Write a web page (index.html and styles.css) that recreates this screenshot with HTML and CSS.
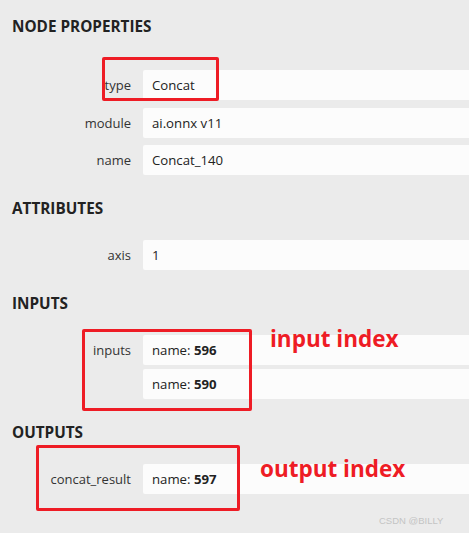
FILE: index.html
```html
<!DOCTYPE html>
<html>
<head>
<meta charset="utf-8">
<link rel="stylesheet" href="styles.css">
</head>
<body>
<div class="panel">
  <section class="section first">
    <h2 class="heading">NODE PROPERTIES</h2>
    <div class="rows">
      <div class="row"><div class="label">type</div><div class="values"><div class="value">Concat</div></div></div>
      <div class="row"><div class="label">module</div><div class="values"><div class="value">ai.onnx v11</div></div></div>
      <div class="row"><div class="label">name</div><div class="values"><div class="value">Concat_140</div></div></div>
    </div>
  </section>
  <section class="section">
    <h2 class="heading">ATTRIBUTES</h2>
    <div class="rows">
      <div class="row"><div class="label">axis</div><div class="values"><div class="value">1</div></div></div>
    </div>
  </section>
  <section class="section">
    <h2 class="heading">INPUTS</h2>
    <div class="rows">
      <div class="row"><div class="label">inputs</div><div class="values tight"><div class="value">name: <b>596</b></div><div class="value">name: <b>590</b></div></div></div>
    </div>
  </section>
  <section class="section">
    <h2 class="heading">OUTPUTS</h2>
    <div class="rows">
      <div class="row"><div class="label">concat_result</div><div class="values"><div class="value">name: <b>597</b></div></div></div>
    </div>
  </section>

  <div class="mark mark-type"></div>
  <div class="mark mark-inputs"></div>
  <div class="mark mark-outputs"></div>
  <div class="note note-input">input index</div>
  <div class="note note-output">output index</div>
  <div class="watermark">CSDN @BILLY</div>
</div>
</body>
</html>
```

FILE: styles.css
```css
html, body {
  margin: 0;
  padding: 0;
  background: #ebebeb;
}
body {
  font-family: "Open Sans", "Noto Sans", sans-serif;
  color: #222;
  width: 469px;
  height: 533px;
  overflow: hidden;
}
.panel {
  position: relative;
  height: 533px;
}
.section {
  padding-top: 23px;
}
.section.first {
  padding-top: 16px;
}
.heading {
  margin: 0 0 0 12px;
  font-size: 15.3px;
  line-height: 20px;
  font-weight: 700;
  color: #222;
}
.rows {
  margin-top: 22px;
  display: flex;
  flex-direction: column;
  gap: 7.5px;
}
.first .rows {
  margin-top: 34px;
}
.row {
  display: grid;
  grid-template-columns: 131px 1fr;
  column-gap: 12px;
}
.label {
  text-align: right;
  font-size: 13px;
  line-height: 30px;
  color: #333;
}
.values {
  display: flex;
  flex-direction: column;
  gap: 7.5px;
}
.values.tight {
  gap: 4px;
}
.value {
  background: #fcfcfc;
  height: 30px;
  line-height: 30px;
  padding-left: 9px;
  font-size: 13.2px;
  color: #222;
  border-radius: 2px 0 0 2px;
}
.value b {
  font-weight: 700;
}
.mark {
  position: absolute;
  border: 3.5px solid #ee1c25;
  border-radius: 2px;
  box-sizing: border-box;
}
.mark-type {
  left: 102px;
  top: 57px;
  width: 117px;
  height: 44px;
}
.mark-inputs {
  left: 82px;
  top: 329px;
  width: 170px;
  height: 82px;
}
.mark-outputs {
  left: 36px;
  top: 445px;
  width: 204px;
  height: 66px;
}
.note {
  position: absolute;
  color: #ee1c25;
  font-weight: 700;
  font-size: 22.5px;
  line-height: 26px;
}
.note-input {
  left: 270px;
  top: 326px;
}
.note-output {
  left: 260px;
  top: 456px;
}
.watermark {
  position: absolute;
  left: 379px;
  top: 515px;
  font-family: "Liberation Sans", Arial, sans-serif;
  font-size: 9.5px;
  line-height: 12px;
  color: #c4c4c4;
}
```
